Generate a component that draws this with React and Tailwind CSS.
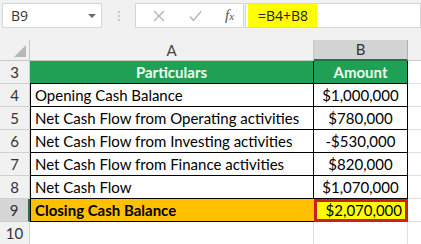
import React from 'react'

const rows = [
  { n: 4, label: 'Opening Cash Balance', amount: '$1,000,000' },
  { n: 5, label: 'Net Cash Flow from Operating activities', amount: '$780,000' },
  { n: 6, label: 'Net Cash Flow from Investing activities', amount: '-$530,000' },
  { n: 7, label: 'Net Cash Flow from Finance activities', amount: '$820,000' },
  { n: 8, label: 'Net Cash Flow', amount: '$1,070,000' },
]

const cellFont = { fontFamily: 'Lato, "Open Sans", sans-serif' }

function RowHead({ n, active = false }) {
  return (
    <div
      className={
        active
          ? 'flex items-center justify-center border-b border-r-2 border-b-[#c8c8c8] border-r-[#217346] bg-[#d6d6d6] text-[15px] text-[#333]'
          : 'flex items-center justify-center border-b border-r border-[#d0d0d0] bg-[#f1f1f1] text-[15px] text-[#333]'
      }
      style={cellFont}
    >
      {n}
    </div>
  )
}

export default function App() {
  return (
    <div className="h-[244px] w-[421px] overflow-hidden bg-white" style={{ fontFamily: '"Open Sans", sans-serif' }}>
      {/* Formula bar */}
      <div className="flex h-[40px] items-start bg-[#f1f1f1] pt-[3px]">
        <div className="ml-[2px] flex h-[25px] w-[100px] items-center justify-between border border-[#d6d6d6] bg-white pl-[8px] pr-[5px] text-[14px] text-[#333]">
          <span>B9</span>
          <span className="h-0 w-0 border-x-[4px] border-t-[4px] border-x-transparent border-t-[#6a6a6a]" />
        </div>
        <div className="flex h-[25px] w-[33px] flex-col items-center justify-center gap-[2px]">
          <span className="h-[2px] w-[2px] rounded-full bg-[#b9b9b9]" />
          <span className="h-[2px] w-[2px] rounded-full bg-[#b9b9b9]" />
          <span className="h-[2px] w-[2px] rounded-full bg-[#b9b9b9]" />
        </div>
        <div className="flex h-[25px] w-[109px] items-center border border-[#d6d6d6] bg-white">
          <svg width="12" height="12" viewBox="0 0 12 12" className="ml-[17px]">
            <path d="M1 1 L11 11 M11 1 L1 11" stroke="#b4b4b4" strokeWidth="1.3" fill="none" />
          </svg>
          <svg width="13" height="12" viewBox="0 0 13 12" className="ml-[24px]">
            <path d="M1 6.5 L4.5 10.5 L12 1.5" stroke="#b4b4b4" strokeWidth="1.4" fill="none" />
          </svg>
          <span className="ml-[23px] text-[15px] italic leading-none text-[#555]" style={{ fontFamily: '"Liberation Serif", serif' }}>
            f<span className="text-[11px]">x</span>
          </span>
        </div>
        <div className="ml-[1px] flex h-[25px] flex-1 items-stretch border border-[#d6d6d6] bg-white pl-[2px]">
          <span className="flex w-[69px] items-center bg-[#ffff00] pl-[10px] text-[14px] text-[#222]">=B4+B8</span>
        </div>
      </div>

      {/* Sheet */}
      <div className="grid grid-cols-[30px_284px_94px_13px] grid-rows-[21px_repeat(8,23px)] whitespace-nowrap" style={cellFont}>
        {/* column headers */}
        <div className="relative border-b border-r border-[#c8c8c8] bg-[#f1f1f1]">
          <span className="absolute bottom-[3px] right-[3px] h-0 w-0 border-b-[12px] border-l-[12px] border-b-[#b8b8b8] border-l-transparent" />
        </div>
        <div className="flex items-center justify-center border-b border-r border-[#c8c8c8] bg-[#f1f1f1] text-[15px] text-[#444]">A</div>
        <div className="flex items-center justify-center border-b-2 border-r border-b-[#217346] border-r-[#b0b0b0] bg-[#d3d3d3] text-[15px] text-[#333]">B</div>
        <div className="border-b border-[#c8c8c8] bg-[#f1f1f1]" />

        {/* row 3 */}
        <RowHead n={3} />
        <div className="flex items-center justify-center border-b border-r border-black bg-[#1fa055] text-[15px] font-bold text-[#eefdf0]">Particulars</div>
        <div className="flex items-center justify-center border-b border-r border-black bg-[#1fa055] text-[15px] font-bold text-[#eefdf0]">Amount</div>
        <div className="border-b border-[#e0e0e0]" />

        {rows.map((r) => (
          <React.Fragment key={r.n}>
            <RowHead n={r.n} />
            <div className="flex items-center border-b border-l border-r border-black pl-[4px] text-[15px] text-black">{r.label}</div>
            <div className="flex items-center justify-center border-b border-r border-black text-[15px] text-black">{r.amount}</div>
            <div className="border-b border-[#e0e0e0]" />
          </React.Fragment>
        ))}

        {/* row 9 */}
        <RowHead n={9} active />
        <div className="flex items-center border-b border-l border-black bg-[#ffc000] pl-[4px] text-[15px] font-bold text-black">Closing Cash Balance</div>
        <div className="flex items-center justify-end border-[3px] border-[#cc1f1f] bg-[#ffff00] pr-[3px] text-[15px] text-black">$2,070,000</div>
        <div className="border-b border-[#e0e0e0]" />

        {/* row 10 */}
        <RowHead n={10} />
        <div className="border-b border-r border-[#e0e0e0]" />
        <div className="border-b border-r border-[#e0e0e0]" />
        <div className="border-b border-[#e0e0e0]" />
      </div>
    </div>
  )
}
